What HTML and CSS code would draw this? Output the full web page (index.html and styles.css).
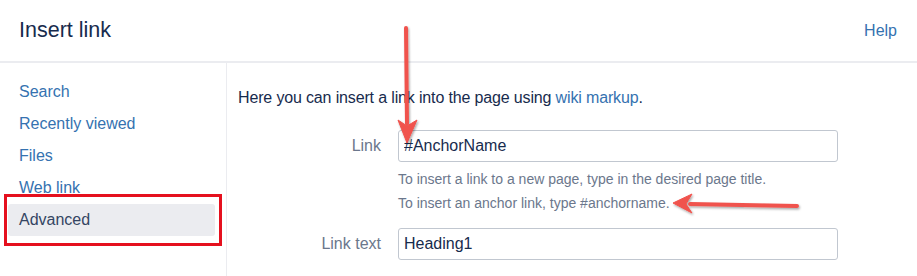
FILE: index.html
```html
<!DOCTYPE html>
<html lang="en">
<head>
  <meta charset="UTF-8">
  <title>Insert link</title>
  <link rel="stylesheet" href="styles.css">
</head>
<body>
  <div class="dialog">
    <div class="dialog-header">
      <h1>Insert link</h1>
      <a class="help-link" href="#">Help</a>
    </div>
    <div class="dialog-body">
      <ul class="nav">
        <li><a href="#">Search</a></li>
        <li><a href="#">Recently viewed</a></li>
        <li><a href="#">Files</a></li>
        <li><a href="#">Web link</a></li>
        <li class="active"><a href="#">Advanced</a></li>
      </ul>
      <div class="panel">
        <p class="intro">Here you can insert a link into the page using <a href="#">wiki markup</a>.</p>
        <div class="field">
          <label for="link">Link</label>
          <div class="control">
            <input id="link" type="text" value="#AnchorName">
            <div class="hint">
              To insert a link to a new page, type in the desired page title.<br>
              To insert an anchor link, type #anchorname.
            </div>
          </div>
        </div>
        <div class="field">
          <label for="linktext">Link text</label>
          <div class="control">
            <input id="linktext" type="text" value="Heading1">
          </div>
        </div>
      </div>
    </div>

    <!-- annotations drawn over the screenshot -->
    <div class="highlight-box"></div>
    <svg class="arrows" width="917" height="276" viewBox="0 0 917 276">
      <defs>
        <filter id="shadow" x="-20%" y="-20%" width="140%" height="140%">
          <feDropShadow dx="1" dy="1.5" stdDeviation="1.2" flood-color="#000" flood-opacity="0.35"/>
        </filter>
      </defs>
      <g fill="#f0534d" stroke="#f0534d" filter="url(#shadow)">
        <line x1="406" y1="28" x2="407" y2="124" stroke-width="4" stroke-linecap="round"/>
        <path d="M398 120 L407 143 L417 120 L407 126 Z" stroke-width="1" stroke-linejoin="round"/>
        <line x1="690" y1="204" x2="797" y2="206" stroke-width="4" stroke-linecap="round"/>
        <path d="M692 194 L673 203 L692 213 L686 204 Z" stroke-width="1" stroke-linejoin="round"/>
      </g>
    </svg>
  </div>
</body>
</html>
```

FILE: styles.css
```css
body {
  margin: 0;
  font-family: "Liberation Sans", Arial, sans-serif;
  color: #172b4d;
  background: #fff;
}

a {
  color: #3572b0;
  text-decoration: none;
}

.dialog {
  position: relative;
  width: 917px;
  height: 276px;
  overflow: hidden;
}

.dialog-header {
  height: 61px;
  border-bottom: 2px solid #ebecf0;
  display: flex;
  align-items: center;
  justify-content: space-between;
  padding: 0 20px 0 19px;
}

.dialog-header h1 {
  margin: 0;
  font-size: 21.5px;
  font-weight: normal;
  color: #172b4d;
}

.help-link {
  font-size: 16px;
}

.dialog-body {
  display: flex;
  height: 213px;
}

/* left navigation */
.nav {
  list-style: none;
  margin: 0;
  padding: 13px 11px 0 8px;
  width: 207px;
  border-right: 1px solid #ebecf0;
}

.nav li {
  height: 32px;
  line-height: 32px;
  padding-left: 11px;
  border-radius: 3px;
  font-size: 16px;
}

.nav li.active {
  background: #ebecf0;
}

.nav li.active a {
  color: #344563;
}

/* right panel */
.panel {
  flex: 1;
  padding: 24px 0 0 11px;
}

.intro {
  margin: 0 0 21px;
  font-size: 16px;
  line-height: 22px;
  letter-spacing: -0.15px;
}

.field {
  display: flex;
  margin-bottom: 13px;
}

.field label {
  width: 143px;
  text-align: right;
  padding-right: 17px;
  font-size: 16px;
  line-height: 32px;
  color: #6b778c;
}

.control {
  width: 440px;
}

.control input {
  box-sizing: border-box;
  width: 440px;
  height: 32px;
  border: 1px solid #c1c7d0;
  border-radius: 3px;
  padding: 0 5px;
  font-family: inherit;
  font-size: 16px;
  color: #172b4d;
}

.hint {
  margin-top: 5px;
  font-size: 14px;
  line-height: 24px;
  color: #6b778c;
}

/* annotations */
.highlight-box {
  position: absolute;
  left: 4px;
  top: 194px;
  width: 212px;
  height: 46px;
  border: 3px solid #e5101e;
}

.arrows {
  position: absolute;
  left: 0;
  top: 0;
  pointer-events: none;
}
```
